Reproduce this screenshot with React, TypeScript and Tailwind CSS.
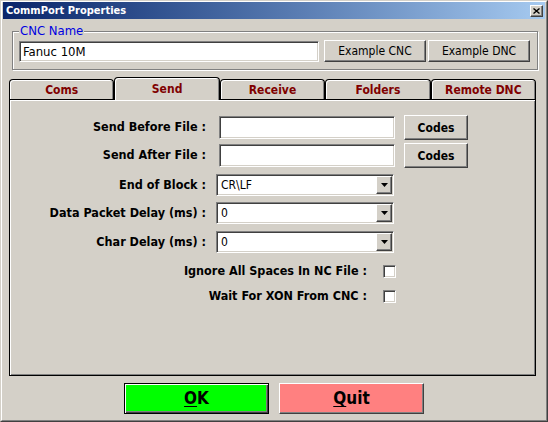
import React from "react";

const sunken =
  "bg-white border border-t-[#808080] border-l-[#808080] border-b-white border-r-white shadow-[inset_1px_1px_0_#404040,inset_-1px_-1px_0_#d4d0c8]";
const raised =
  "bg-[#d4d0c8] border border-t-white border-l-white border-b-[#404040] border-r-[#404040] shadow-[inset_-1px_-1px_0_#808080]";

function Arrow() {
  return (
    <svg width="7" height="4" viewBox="0 0 7 4">
      <path d="M0 0H7L3.5 4Z" fill="#000" />
    </svg>
  );
}

function Combo({ value }: { value: string }) {
  return (
    <div className={`${sunken} ml-[10px] w-[178px] h-[22px] flex items-center p-[1px]`}>
      <span className="flex-1 pl-[3px] text-[12px] leading-none">{value}</span>
      <div className={`${raised} w-[16px] h-[18px] flex items-center justify-center`}>
        <Arrow />
      </div>
    </div>
  );
}

function Label({ children }: { children: React.ReactNode }) {
  return <div className="w-[196px] text-right font-bold text-[12.5px] leading-none">{children}</div>;
}

function Tab({ label, active }: { label: string; active?: boolean }) {
  return (
    <div
      className={
        active
          ? "flex-1 h-[23px] -mb-px relative z-10 bg-[#d4d0c8] border border-b-0 border-black rounded-t-[4px] shadow-[inset_1px_1px_0_#fff,inset_-1px_0_0_#808080] flex items-center justify-center text-[#800000] font-bold text-[12px] leading-none"
          : "flex-1 h-[20px] bg-[#d4d0c8] border border-b-0 border-black rounded-t-[4px] shadow-[inset_1px_1px_0_#fff,inset_-1px_0_0_#808080] flex items-center justify-center text-[#800000] font-bold text-[12px] leading-none"
      }
    >
      {label}
    </div>
  );
}

function Check({ label, className }: { label: string; className: string }) {
  return (
    <div className={`w-[386px] h-[13px] flex items-center justify-end ${className}`}>
      <span className="font-bold text-[12.5px] leading-none mr-[16px]">{label}</span>
      <div className={`${sunken} w-[13px] h-[13px]`} />
    </div>
  );
}

export default function App() {
  return (
    <div className="w-[548px] h-[422px] bg-[#d4d0c8] border border-t-[#d4d0c8] border-l-[#d4d0c8] border-r-[#404040] border-b-[#404040] font-['DejaVu_Sans_Condensed','DejaVu_Sans',sans-serif] text-black overflow-hidden">
      <div className="h-full border border-t-white border-l-white border-r-[#808080] border-b-[#808080] px-px flex flex-col">
        {/* Title bar */}
        <div className="h-[17px] shrink-0 flex items-center justify-between bg-gradient-to-r from-[#0a246a] to-[#a6caf0] pl-[3px] pr-[2px]">
          <span className="text-white font-bold text-[11px] leading-none">CommPort Properties</span>
          <div className={`${raised} w-[13px] h-[12px] flex items-center justify-center`}>
            <svg width="7" height="6" viewBox="0 0 7 6">
              <path d="M0.5 0.5L6.5 5.5M6.5 0.5L0.5 5.5" stroke="#000" strokeWidth="1.4" />
            </svg>
          </div>
        </div>

        {/* CNC Name group */}
        <div className="relative mt-[12px] ml-[9px] mr-[7px] border border-[#808080] shadow-[inset_1px_1px_0_#fff,1px_1px_0_#fff] pl-[6px] pt-[8px] pb-[7px] flex items-center">
          <span className="absolute -top-[8px] left-[6px] bg-[#d4d0c8] px-[1px] text-[#0000e0] text-[13px] leading-[14px]">
            CNC Name
          </span>
          <div className={`${sunken} w-[300px] h-[21px] flex items-center pl-[3px] text-[13px] leading-none`}>
            Fanuc 10M
          </div>
          <button className={`${raised} ml-[5px] w-[102px] h-[22px] text-[12px] leading-none`}>Example CNC</button>
          <button className={`${raised} ml-[2px] w-[102px] h-[22px] text-[12px] leading-none`}>Example DNC</button>
        </div>

        {/* Tabs */}
        <div className="mt-[7px] ml-[6px] mr-[9px] flex items-end">
          <Tab label="Coms" />
          <Tab label="Send" active />
          <Tab label="Receive" />
          <Tab label="Folders" />
          <Tab label="Remote DNC" />
        </div>
        <div className="ml-[6px] mr-[9px] h-[277px] shrink-0 border border-black shadow-[inset_1px_1px_0_#fff,inset_-1px_-1px_0_#808080] flex flex-col">
          <div className="mt-[16px] h-[23px] flex items-center">
            <Label>Send Before File :</Label>
            <div className={`${sunken} ml-[13px] w-[176px] h-[23px]`} />
            <button className={`${raised} ml-[9px] w-[64px] h-[25px] font-bold text-[12px] leading-none`}>Codes</button>
          </div>
          <div className="mt-[5px] h-[23px] flex items-center">
            <Label>Send After File :</Label>
            <div className={`${sunken} ml-[13px] w-[176px] h-[23px]`} />
            <button className={`${raised} ml-[9px] w-[64px] h-[25px] font-bold text-[12px] leading-none`}>Codes</button>
          </div>
          <div className="mt-[7px] h-[22px] flex items-center">
            <Label>End of Block :</Label>
            <Combo value="CR\LF" />
          </div>
          <div className="mt-[6px] h-[22px] flex items-center">
            <Label>Data Packet Delay (ms) :</Label>
            <Combo value="0" />
          </div>
          <div className="mt-[7px] h-[22px] flex items-center">
            <Label>Char Delay (ms) :</Label>
            <Combo value="0" />
          </div>
          <Check label="Ignore All Spaces In NC File :" className="mt-[12px]" />
          <Check label="Wait For XON From CNC :" className="mt-[12px]" />
        </div>

        {/* Bottom buttons */}
        <div className="mt-[7px] flex justify-center gap-[10px]">
          <button className="w-[145px] h-[31px] bg-[#00ff00] border border-black shadow-[inset_1px_1px_0_#fff,inset_-1px_-1px_0_#404040,inset_-2px_-2px_0_#808080] font-bold text-[17px] leading-none">
            <span className="underline underline-offset-2">O</span>K
          </button>
          <button className="w-[145px] h-[31px] bg-[#ff8080] border border-t-white border-l-white border-r-[#404040] border-b-[#404040] shadow-[inset_-1px_-1px_0_#808080] font-bold text-[17px] leading-none">
            <span className="underline underline-offset-2">Q</span>uit
          </button>
        </div>
      </div>
    </div>
  );
}
